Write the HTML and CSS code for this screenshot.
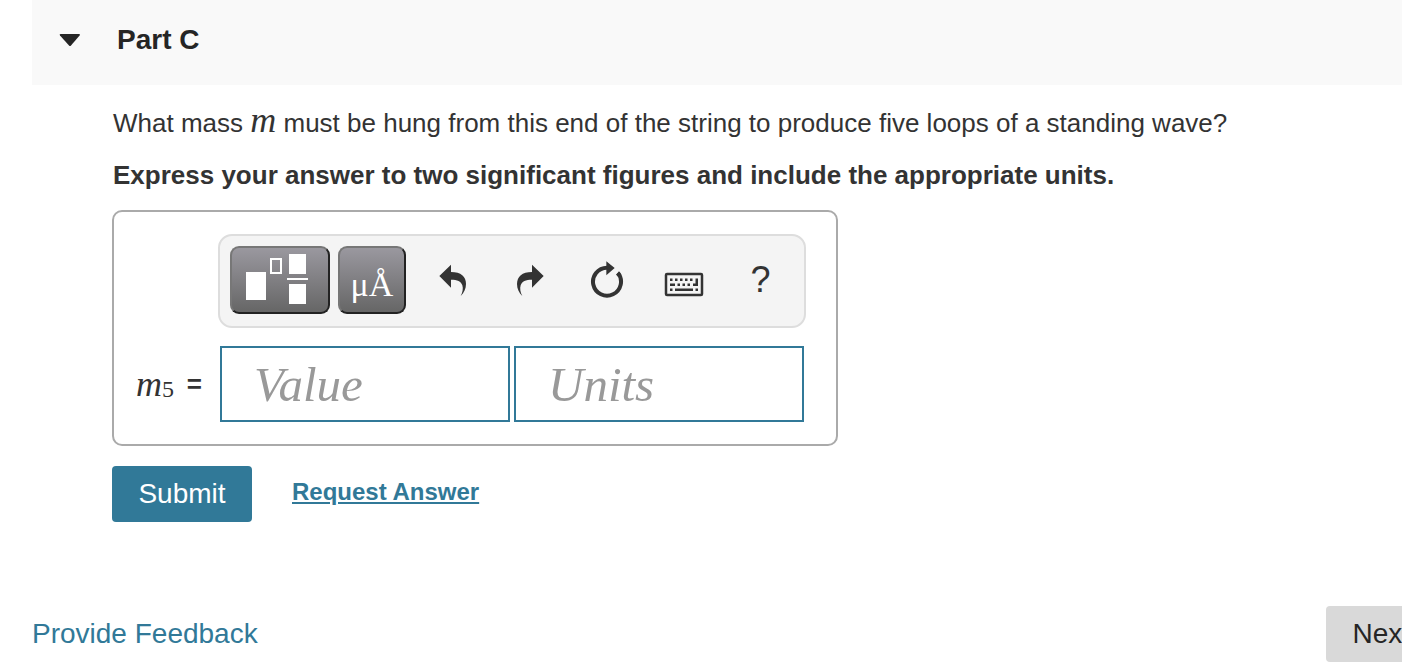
FILE: index.html
```html
<!DOCTYPE html>
<html lang="en">
<head>
<meta charset="utf-8">
<title>Part C</title>
<link rel="stylesheet" href="styles.css">
</head>
<body>
<main class="page">
  <section class="part">
    <header class="part-header">
      <button class="collapse" type="button" aria-label="Collapse Part C">
        <svg width="22" height="14" viewBox="0 0 22 14" aria-hidden="true"><path d="M1.500 1h18.500q1.800 0 .6 1.500L12 12.500q-1 1-2 0L1 2.500Q0 1 1.500 1z"/></svg>
      </button>
      <h2 class="part-title">Part C</h2>
    </header>
    <div class="part-body">
      <p class="question">What mass <i class="math">m</i> must be hung from this end of the string to produce five loops of a standing wave?</p>
      <p class="instruction">Express your answer to two significant figures and include the appropriate units.</p>
      <form class="answer">
        <div class="answer-box">
          <div class="toolbar" role="toolbar" aria-label="Equation tools">
            <button class="palette palette-wide" type="button" aria-label="Templates">
              <svg width="64" height="52" viewBox="0 0 64 52" aria-hidden="true">
                <path fill="#fff" d="M0 19h20v28H0zM43 1h17v20H43zM43 31h17v20H43zM41 25h21v2H41z"/>
                <path fill="none" stroke="#fff" stroke-width="2" d="M25 6h10v14H25z"/>
              </svg>
            </button>
            <button class="palette palette-units" type="button" aria-label="Units palette">μÅ</button>
            <div class="tools">
              <button class="tool" type="button" aria-label="Undo">
                <svg width="28" height="32" viewBox="0 0 84 96" aria-hidden="true"><path d="M1 36L36 2v22c30 0 45 14 45 36 0 14-6 27-16 36 6-11 8-22 5-32-4-12-15-17-34-17v24z"/></svg>
              </button>
              <button class="tool" type="button" aria-label="Redo">
                <svg width="28" height="32" viewBox="0 0 84 96" aria-hidden="true"><path d="M83 36L48 2v22C18 24 3 38 3 60c0 14 6 27 16 36-6-11-8-22-5-32 4-12 15-17 34-17v24z"/></svg>
              </button>
              <button class="tool" type="button" aria-label="Reset">
                <svg width="34" height="38" viewBox="0 0 102 114" aria-hidden="true">
                  <path fill="none" stroke="#333" stroke-width="12" d="M51 20A42 42 0 1 0 84 36"/>
                  <path d="M49 1l25 20-25 22zM78 41l9-10 7 10-8 7z"/>
                </svg>
              </button>
              <button class="tool tool-keyboard" type="button" aria-label="Keyboard shortcuts">
                <svg width="40" height="26" viewBox="0 0 40 26" aria-hidden="true">
                  <rect x="2" y="2" width="36" height="21" rx="1" fill="none" stroke="#333" stroke-width="2.500"/>
                  <path d="M6 6.500h2.500V9H6zM11 6.500h2.500V9H11zM16 6.500h2.500V9H16zM21 6.500h2.500V9H21zM26 6.500h2.500V9H26zM31.500 6.500H34V14h-5v-2.500h2.500zM6 11.500h5V14H6zM13.500 11.500H16V14h-2.500zM18.500 11.500H21V14h-2.500zM23.500 11.500H26V14h-2.500zM6 16.500h2.500V19H6zM11 16.500h18V19H11zM31.500 16.500H34V19h-2.500z"/>
                </svg>
              </button>
              <button class="tool" type="button" aria-label="Help">?</button>
            </div>
          </div>
          <label class="variable" for="value"><i>m</i><sub>5</sub><span class="equals">=</span></label>
          <div class="fields">
            <input class="field" id="value" type="text" placeholder="Value">
            <input class="field" type="text" placeholder="Units" aria-label="Units">
          </div>
        </div>
        <div class="actions">
          <button class="submit" type="submit">Submit</button>
          <a class="request" href="#answer">Request Answer</a>
        </div>
      </form>
    </div>
  </section>
  <footer class="footer">
    <a class="feedback" href="#feedback">Provide Feedback</a>
    <button class="next" type="button">Next</button>
  </footer>
</main>
</body>
</html>
```
FILE: styles.css
```css
* { box-sizing: border-box; }

body {
  margin: 0;
  background: #fff;
  color: #333;
  font: 26px/36px "Liberation Sans", Arial, sans-serif;
}

button, input { font: inherit; color: inherit; }

button {
  margin: 0;
  padding: 0;
  border: 0;
  background: none;
  cursor: pointer;
}

.page {
  padding-left: 32px;
  overflow: hidden;
}

.part-header {
  display: flex;
  align-items: center;
  gap: 35px;
  padding: 22px 26px 27px;
  background: #f9f9f9;
  color: #252525;
}

.collapse {
  display: flex;
  width: 24px;
  padding: 2px 1px;
  fill: #252525;
}

.part-title {
  margin: 0;
  font-size: 28px;
  line-height: 36px;
}

.part-body { padding: 20px 0 0 80px; }

.question, .instruction {
  margin: 0;
  padding: 0 1px;
}

.instruction {
  margin: 16px 0 17px;
  font-weight: bold;
}

.math {
  font: italic 36px/28px "Liberation Serif", serif;
}

.answer-box {
  display: grid;
  grid-template-columns: auto 1fr;
  gap: 18px 16px;
  width: fit-content;
  padding: 22px 30px 22px 22px;
  border: 2px solid #aaa;
  border-radius: 10px;
}

.toolbar {
  grid-column: 2;
  display: flex;
  align-items: center;
  gap: 8px;
  padding: 10px 4px 12px 10px;
  border: 2px solid #ddd;
  border-radius: 14px;
  background: #f4f4f4;
}

.palette {
  display: flex;
  align-items: center;
  justify-content: center;
  height: 68px;
  border: 2px solid;
  border-color: #777 #222 #222 #777;
  border-radius: 9px;
  background: linear-gradient(#9a989f, #666);
  color: #fff;
}

.palette-wide {
  width: 100px;
  padding: 0 4px 2px 0;
}

.palette-units {
  width: 68px;
  padding-top: 10px;
  font: 34px/40px "Liberation Serif", serif;
}

.tools { display: flex; }

.tool {
  display: flex;
  align-items: center;
  justify-content: center;
  width: 77px;
  height: 68px;
  fill: #333;
  font-size: 36px;
}

.tool-keyboard { padding-top: 10px; }

.variable {
  display: flex;
  align-items: center;
  width: 66px;
  font: 36px/36px "Liberation Serif", serif;
}

.variable sub {
  padding-top: 10px;
  font-size: 24px;
  vertical-align: baseline;
}

.equals {
  margin-left: auto;
  font: bold 26px/36px "Liberation Sans", Arial, sans-serif;
}

.fields {
  display: flex;
  gap: 4px;
  padding: 0 2px;
}

.field {
  width: 290px;
  height: 76px;
  padding: 0 32px;
  border: 2px solid #317998;
  border-radius: 0;
  background: #fff;
  font: italic 49px/56px "Liberation Serif", serif;
}

.field::placeholder {
  color: #999;
  opacity: 1;
}

.actions {
  display: flex;
  align-items: center;
  gap: 40px;
  margin-top: 20px;
}

.submit {
  width: 140px;
  height: 56px;
  border-radius: 4px;
  background: #317998;
  color: #fff;
  font-size: 28px;
}

.request {
  padding-bottom: 4px;
  color: #317998;
  font-size: 24px;
  font-weight: bold;
}

.footer {
  display: flex;
  align-items: center;
  justify-content: space-between;
  margin: 84px -34px 0 0;
  font-size: 28px;
}

.feedback {
  color: #317998;
  text-decoration: none;
}

.next {
  height: 56px;
  padding: 0 26px;
  border-radius: 4px;
  background: #d9d9d9;
  color: #252525;
}
```
